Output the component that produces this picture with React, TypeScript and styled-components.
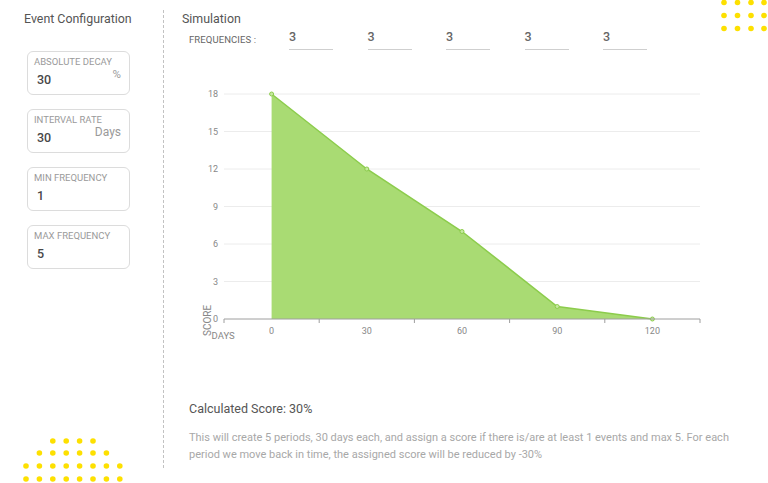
import React from 'react';
import styled, { createGlobalStyle } from 'styled-components';

const GlobalStyle = createGlobalStyle`
  html, body {
    margin: 0;
    padding: 0;
    background: #fff;
  }
  body {
    font-family: Roboto, 'Liberation Sans', Arial, sans-serif;
  }
`;

const fields = [
  { label: 'Absolute Decay', value: '30', unit: '%' },
  { label: 'Interval Rate', value: '30', unit: 'Days' },
  { label: 'Min Frequency', value: '1' },
  { label: 'Max Frequency', value: '5' },
];

const frequencies = [3, 3, 3, 3, 3];

const data = [
  { day: 0, score: 18 },
  { day: 30, score: 12 },
  { day: 60, score: 7 },
  { day: 90, score: 1 },
  { day: 120, score: 0 },
];

const Page = styled.div`
  position: relative;
  display: flex;
  width: 768px;
  height: 483px;
  overflow: hidden;
`;

const LeftPanel = styled.aside`
  width: 164px;
  box-sizing: border-box;
  margin-top: 10px;
  height: 458px;
  padding: 1px 0 0 24px;
  border-right: 1px dashed #c2c2c2;
`;

const Title = styled.h2`
  margin: 0;
  font-size: 12.4px;
  line-height: 16px;
  font-weight: 400;
  color: #555;
`;

const Cards = styled.div`
  display: flex;
  flex-direction: column;
  gap: 14px;
  margin: 24px 0 0 3px;
`;

const Card = styled.div`
  width: 103px;
  height: 44px;
  box-sizing: border-box;
  border: 1px solid #dcdcdc;
  border-radius: 6px;
  padding: 4px 8px 0 6px;
`;

const CardLabel = styled.div`
  font-size: 9.5px;
  line-height: 11px;
  text-transform: uppercase;
  color: #9a9a9a;
  white-space: nowrap;
`;

const CardRow = styled.div`
  display: flex;
  justify-content: space-between;
  align-items: flex-start;
`;

const CardValue = styled.div`
  margin: 6px 0 0 3px;
  font-size: 12.5px;
  line-height: 14px;
  font-weight: 500;
  color: #484848;
`;

const CardUnit = styled.div<{ $small?: boolean }>`
  font-size: ${(p) => (p.$small ? '11.5px' : '12px')};
  line-height: 14px;
  color: #9a9a9a;
`;

const RightPanel = styled.main`
  flex: 1;
  padding: 11px 0 0 18px;
`;

const FreqRow = styled.div`
  display: flex;
  align-items: flex-start;
  margin: 3px 0 0 7px;
`;

const FreqLabel = styled.div`
  width: 100px;
  margin-top: 4px;
  font-size: 9.5px;
  line-height: 12px;
  color: #666;
  letter-spacing: 0.1px;
`;

const FreqInput = styled.div`
  width: 44px;
  margin-right: 34.5px;
  padding-bottom: 5px;
  border-bottom: 1.5px solid #cfcfcf;
  font-size: 12.5px;
  line-height: 14px;
  font-weight: 500;
  color: #666;
`;

const ChartBox = styled.div`
  margin: 29px 0 0 13px;
  width: 520px;
  height: 270px;
`;

const ScoreTitle = styled.div`
  margin: 52px 0 0 7px;
  font-size: 12.5px;
  line-height: 16px;
  color: #555;
`;

const Note = styled.p`
  margin: 12px 0 0 7px;
  width: 550px;
  font-size: 11px;
  line-height: 17px;
  color: #a8a8a8;
`;

const Dots = styled.svg`
  position: absolute;
`;

const TopDots = styled(Dots)`
  top: 0;
  right: 0;
`;

const BottomDots = styled(Dots)`
  left: 0;
  bottom: 0;
`;

const GREEN_FILL = '#a9db73';
const GREEN_LINE = '#8ccc4c';

function Chart() {
  const x0 = 29;
  const x1 = 505;
  const band = (x1 - x0) / data.length;
  const yZero = 240;
  const unit = 12.5;
  const px = (i: number) => x0 + band * (i + 0.5);
  const py = (v: number) => yZero - v * unit;
  const pts = data.map((d, i) => `${px(i)},${py(d.score)}`).join(' ');
  const area = `M${px(0)},${yZero} L${pts.split(' ').join(' L')} L${px(data.length - 1)},${yZero} Z`;
  const ticks = [0, 3, 6, 9, 12, 15, 18];

  return (
    <svg width={520} height={270} viewBox="0 0 520 270">
      {ticks.slice(1).map((t) => (
        <line key={t} x1={x0} x2={x1} y1={py(t)} y2={py(t)} stroke="#ececec" strokeWidth={1} />
      ))}
      <path d={area} fill={GREEN_FILL} />
      <polyline points={pts} fill="none" stroke={GREEN_LINE} strokeWidth={1.5} />
      {data.map((d, i) => (
        <circle key={d.day} cx={px(i)} cy={py(d.score)} r={2} fill="#c6e9a0" stroke={GREEN_LINE} strokeWidth={1} />
      ))}
      <line x1={x0} x2={x1} y1={yZero} y2={yZero} stroke="#9e9e9e" strokeWidth={1} />
      {Array.from({ length: data.length + 1 }).map((_, i) => (
        <line key={i} x1={x0 + band * i} x2={x0 + band * i} y1={yZero} y2={yZero + 4} stroke="#9e9e9e" />
      ))}
      {ticks.map((t) => (
        <text key={t} x={23} y={py(t) + 3} textAnchor="end" fontSize={9} fill="#888" fontFamily="Roboto, sans-serif">
          {t}
        </text>
      ))}
      {data.map((d, i) => (
        <text key={d.day} x={px(i)} y={255} textAnchor="middle" fontSize={9} fill="#888" fontFamily="Roboto, sans-serif">
          {d.day}
        </text>
      ))}
      <text
        x={0}
        y={0}
        transform="translate(15.5 257) rotate(-90)"
        fontSize={10}
        fill="#888"
        fontFamily="Roboto, sans-serif"
      >
        SCORE
      </text>
      <text x={16.5} y={260} fontSize={9.5} fill="#888" fontFamily="Roboto, sans-serif">
        DAYS
      </text>
    </svg>
  );
}

const DOT = '#fde000';

function TopRightDots() {
  const cols = [4, 17.5, 31, 44];
  const rows = [2.5, 15.5, 28.5];
  return (
    <TopDots width={48} height={34}>
      {rows.map((y) => cols.map((x) => <circle key={`${x}-${y}`} cx={x} cy={y} r={2.8} fill={DOT} />))}
    </TopDots>
  );
}

function BottomLeftDots() {
  const rows = [
    { y: 11, from: 2, count: 4 },
    { y: 23, from: 1, count: 6 },
    { y: 36, from: 0, count: 8 },
    { y: 49, from: 0, count: 8 },
  ];
  return (
    <BottomDots width={130} height={53}>
      {rows.map((r) =>
        Array.from({ length: r.count }).map((_, i) => (
          <circle key={`${r.y}-${i}`} cx={26 + (r.from + i) * 13.4} cy={r.y} r={2.8} fill={DOT} />
        )),
      )}
    </BottomDots>
  );
}

export default function App() {
  return (
    <>
      <GlobalStyle />
      <Page>
        <LeftPanel>
          <Title>Event Configuration</Title>
          <Cards>
            {fields.map((f) => (
              <Card key={f.label}>
                <CardLabel>{f.label}</CardLabel>
                <CardRow>
                  <CardValue>{f.value}</CardValue>
                  {f.unit && <CardUnit $small={f.unit === '%'}>{f.unit}</CardUnit>}
                </CardRow>
              </Card>
            ))}
          </Cards>
        </LeftPanel>
        <RightPanel>
          <Title>Simulation</Title>
          <FreqRow>
            <FreqLabel>FREQUENCIES :</FreqLabel>
            {frequencies.map((f, i) => (
              <FreqInput key={i}>{f}</FreqInput>
            ))}
          </FreqRow>
          <ChartBox>
            <Chart />
          </ChartBox>
          <ScoreTitle>Calculated Score: 30%</ScoreTitle>
          <Note>
            This will create 5 periods, 30 days each, and assign a score if there is/are at least 1 events and max 5. For each
            period we move back in time, the assigned score will be reduced by -30%
          </Note>
        </RightPanel>
        <TopRightDots />
        <BottomLeftDots />
      </Page>
    </>
  );
}
